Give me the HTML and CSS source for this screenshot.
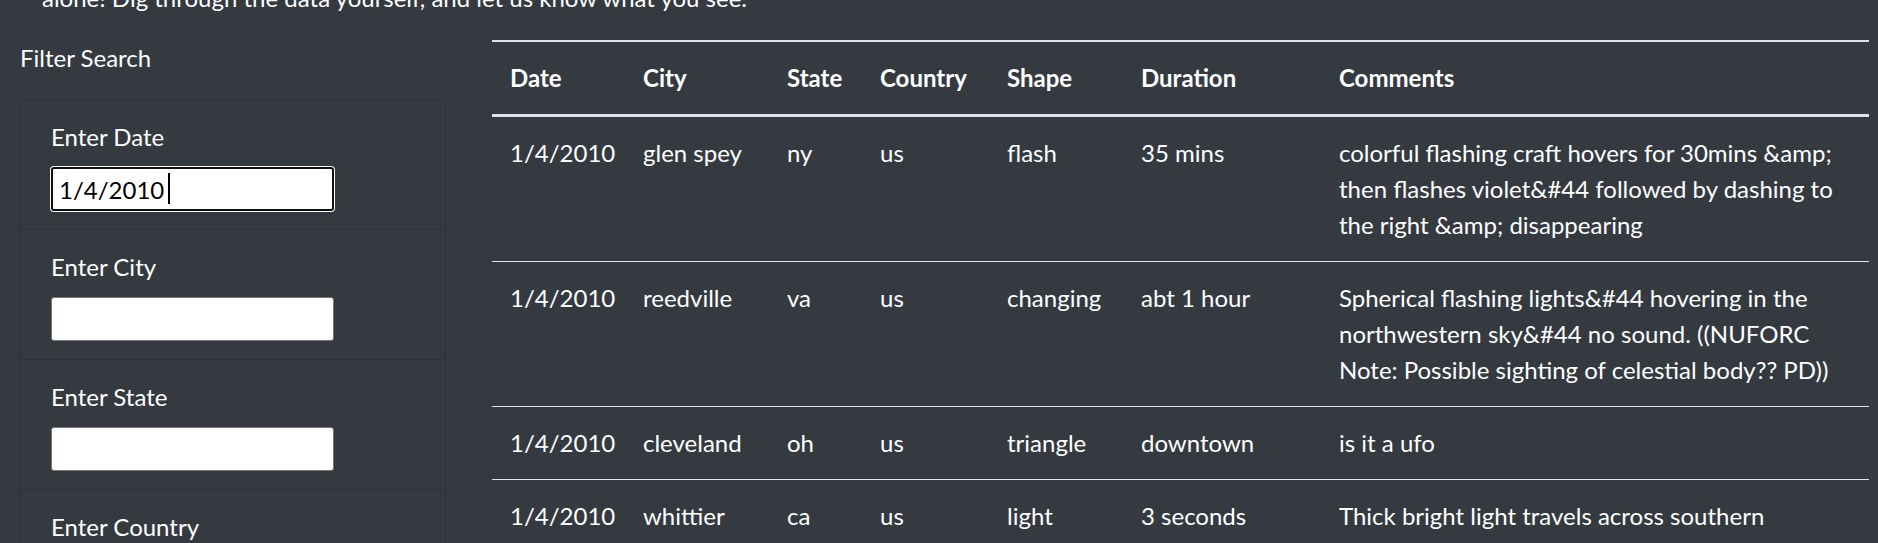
FILE: index.html
```html
<!DOCTYPE html>
<html lang="en">
<head>
  <meta charset="UTF-8">
  <meta name="viewport" content="width=device-width, initial-scale=1.0">
  <title>UFO Sightings</title>
  <link rel="stylesheet" href="styles.css">
</head>
<body>
  <p class="intro">alone! Dig through the data yourself, and let us know what you see.</p>

  <div class="main">
    <aside class="sidebar">
      <div class="filter-title">Filter Search</div>
      <ul class="filters">
        <li class="filter">
          <label for="datetime">Enter Date</label>
          <span class="field">
            <input class="filter-input focused" type="text" id="datetime" value="1/4/2010">
            <span class="caret"></span>
          </span>
        </li>
        <li class="filter">
          <label for="city">Enter City</label>
          <input class="filter-input" type="text" id="city">
        </li>
        <li class="filter">
          <label for="state">Enter State</label>
          <input class="filter-input" type="text" id="state">
        </li>
        <li class="filter">
          <label for="country">Enter Country</label>
          <input class="filter-input" type="text" id="country">
        </li>
        <li class="filter">
          <label for="shape">Enter Shape</label>
          <input class="filter-input" type="text" id="shape">
        </li>
      </ul>
    </aside>

    <div class="results">
      <table class="ufo-table">
        <colgroup>
          <col class="col-date">
          <col class="col-city">
          <col class="col-state">
          <col class="col-country">
          <col class="col-shape">
          <col class="col-duration">
          <col class="col-comments">
        </colgroup>
        <thead>
          <tr>
            <th>Date</th>
            <th>City</th>
            <th>State</th>
            <th>Country</th>
            <th>Shape</th>
            <th>Duration</th>
            <th>Comments</th>
          </tr>
        </thead>
        <tbody>
          <tr>
            <td>1/4/2010</td>
            <td>glen spey</td>
            <td>ny</td>
            <td>us</td>
            <td>flash</td>
            <td>35 mins</td>
            <td>colorful flashing craft hovers for 30mins &amp;amp; then flashes violet&amp;#44 followed by dashing to the right &amp;amp; disappearing</td>
          </tr>
          <tr>
            <td>1/4/2010</td>
            <td>reedville</td>
            <td>va</td>
            <td>us</td>
            <td>changing</td>
            <td>abt 1 hour</td>
            <td>Spherical flashing lights&amp;#44 hovering in the northwestern sky&amp;#44 no sound. ((NUFORC Note: Possible sighting of celestial body?? PD))</td>
          </tr>
          <tr>
            <td>1/4/2010</td>
            <td>cleveland</td>
            <td>oh</td>
            <td>us</td>
            <td>triangle</td>
            <td>downtown</td>
            <td>is it a ufo</td>
          </tr>
          <tr>
            <td>1/4/2010</td>
            <td>whittier</td>
            <td>ca</td>
            <td>us</td>
            <td>light</td>
            <td>3 seconds</td>
            <td>Thick bright light travels across southern California sky</td>
          </tr>
        </tbody>
      </table>
    </div>
  </div>
</body>
</html>
```

FILE: styles.css
```css
* {
  box-sizing: border-box;
}

html, body {
  height: 100%;
}

body {
  margin: 0;
  background-color: #343a40;
  color: #fff;
  font-family: "Segoe UI", Lato, "Open Sans", sans-serif;
  font-size: 24px;
  line-height: 36px;
  overflow: hidden;
}

.intro {
  margin: -20px 0 24px;
  padding-left: 42px;
}

.main {
  display: flex;
  gap: 46px;
  padding-left: 20px;
}

.sidebar {
  flex: 0 0 426px;
}

.filter-title {
  margin-bottom: 23px;
}

.filters {
  list-style: none;
  margin: 0;
  padding: 0;
  border: 1px solid rgba(0, 0, 0, 0.125);
  border-radius: 6px;
}

.filter {
  display: flex;
  flex-direction: column;
  align-items: flex-start;
  padding: 19px 30px 18px;
}

.filter + .filter {
  border-top: 1px solid rgba(0, 0, 0, 0.125);
}

.filter label {
  margin-bottom: 12px;
}

.field {
  position: relative;
  display: block;
}

.filter-input {
  width: 283px;
  height: 44px;
  padding: 0 6px;
  border: 1px solid #767676;
  border-radius: 3px;
  background: #fff;
  color: #000;
  font: inherit;
}

.filter-input.focused {
  border: 2px solid #101010;
  padding: 0 6px;
  box-shadow: 0 0 0 1px #fff;
  outline: none;
}

.caret {
  position: absolute;
  left: 117px;
  top: 6px;
  width: 2px;
  height: 31px;
  background: #000;
}

.results {
  flex: 0 0 1377px;
}

.ufo-table {
  width: 1377px;
  table-layout: fixed;
  border-collapse: collapse;
  color: #fff;
}

.col-date { width: 133px; }
.col-city { width: 144px; }
.col-state { width: 93px; }
.col-country { width: 127px; }
.col-shape { width: 134px; }
.col-duration { width: 198px; }

.ufo-table th,
.ufo-table td {
  padding: 18px;
  text-align: left;
  vertical-align: top;
  border-top: 1px solid #dee2e6;
}

.ufo-table thead th {
  font-weight: 700;
  border-top: 2px solid #dee2e6;
  border-bottom: 3px solid #dee2e6;
}
```
